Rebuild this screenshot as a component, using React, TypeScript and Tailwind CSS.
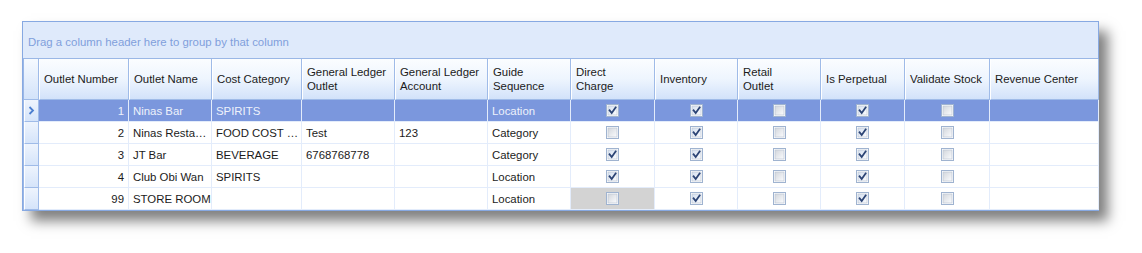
import React from 'react';

type Row = {
    num: string;
    name: string;
    cost: string;
    glOutlet: string;
    glAccount: string;
    guide: string;
    direct: boolean;
    inventory: boolean;
    retail: boolean;
    perpetual: boolean;
    validate: boolean;
    greyDirect?: boolean;
};

const rows: Row[] = [
    { num: '1', name: 'Ninas Bar', cost: 'SPIRITS', glOutlet: '', glAccount: '', guide: 'Location', direct: true, inventory: true, retail: false, perpetual: true, validate: false },
    { num: '2', name: 'Ninas Resta…', cost: 'FOOD COST …', glOutlet: 'Test', glAccount: '123', guide: 'Category', direct: false, inventory: true, retail: false, perpetual: true, validate: false },
    { num: '3', name: 'JT Bar', cost: 'BEVERAGE', glOutlet: '6768768778', glAccount: '', guide: 'Category', direct: true, inventory: true, retail: false, perpetual: true, validate: false },
    { num: '4', name: 'Club Obi Wan', cost: 'SPIRITS', glOutlet: '', glAccount: '', guide: 'Location', direct: true, inventory: true, retail: false, perpetual: true, validate: false },
    { num: '99', name: 'STORE ROOM', cost: '', glOutlet: '', glAccount: '', guide: 'Location', direct: false, inventory: true, retail: false, perpetual: true, validate: false, greyDirect: true },
];

const headers = [
    'Outlet Number',
    'Outlet Name',
    'Cost Category',
    'General Ledger Outlet',
    'General Ledger Account',
    'Guide Sequence',
    'Direct Charge',
    'Inventory',
    'Retail Outlet',
    'Is Perpetual',
    'Validate Stock',
    'Revenue Center',
];

// header labels that wrap onto two lines
const twoLine: { [key: string]: [string, string] } = {
    'General Ledger Outlet': ['General Ledger', 'Outlet'],
    'General Ledger Account': ['General Ledger', 'Account'],
    'Guide Sequence': ['Guide', 'Sequence'],
    'Direct Charge': ['Direct', 'Charge'],
    'Retail Outlet': ['Retail', 'Outlet'],
};

const cols = 'grid grid-cols-[15px_90px_83px_90px_93px_93px_83px_84px_83px_83px_84px_85px_109px]';

const Check: React.FC<{ checked: boolean }> = ({ checked }) => (
    <svg width="13" height="13" viewBox="0 0 13 13" className="block">
        <defs>
            <linearGradient id={checked ? 'cbOn' : 'cbOff'} x1="0" y1="0" x2="1" y2="1">
                <stop offset="0" stopColor={checked ? '#d5e0f0' : '#d2d6dc'} />
                <stop offset="1" stopColor="#fbfcfe" />
            </linearGradient>
        </defs>
        <rect x="0.5" y="0.5" width="12" height="12" fill="#ffffff" stroke="#9fb3d0" />
        <rect x="2" y="2" width="9" height="9" fill={`url(#${checked ? 'cbOn' : 'cbOff'})`} stroke="#bcc6d4" strokeWidth="0.7" />
        {checked && (
            <path d="M3.6 6.3 L5.7 9 L9.6 3.5" fill="none" stroke="#2c4475" strokeWidth="1.8" strokeLinecap="square" />
        )}
    </svg>
);

const Cell: React.FC<{ children?: React.ReactNode; className?: string }> = ({ children, className }) => (
    <div className={`h-[22px] border-r border-b border-[#e3ecfb] flex items-center px-1 overflow-hidden whitespace-nowrap ${className || ''}`}>
        {children}
    </div>
);

export default function App() {
    return (
        <div className="w-[1142px] h-[253px] bg-white pt-[21px] pl-[22px] font-['Liberation_Sans',Arial,sans-serif] text-[11.4px] leading-[14px] text-[#1b1b1b]">
            <div className="w-[1077px] border border-[#87a9e2] bg-[#dfeafb] shadow-[9px_10px_12px_rgba(0,0,0,0.5)]">
                <div className="h-[36px] flex items-center pl-[5px] pt-[3px] text-[#7f9fdc]">
                    Drag a column header here to group by that column
                </div>
                <div className="bg-white border-t border-l border-[#9ab7e6]">
                    {/* header */}
                    <div className={cols}>
                        <div className="h-[41px] border-r border-b border-[#9fbbe8] bg-gradient-to-b from-[#f6faff] to-[#d3e3fa]" />
                        {headers.map(h => (
                            <div
                                key={h}
                                className="h-[41px] border-r border-b border-[#9fbbe8] bg-gradient-to-b from-[#fbfdff] via-[#eef5fe] to-[#d2e2fa] flex flex-col justify-center px-[4px] border-l border-l-white whitespace-nowrap overflow-hidden"
                            >
                                {twoLine[h] ? (
                                    <>
                                        <span>{twoLine[h][0]}</span>
                                        <span>{twoLine[h][1]}</span>
                                    </>
                                ) : (
                                    <span>{h}</span>
                                )}
                            </div>
                        ))}
                    </div>
                    {/* rows */}
                    {rows.map((r, i) => {
                        const sel = i === 0;
                        const rowCls = sel ? 'bg-[#7b97dd] text-[#eef2fb] border-[#7b97dd]' : '';
                        const boxes = [r.direct, r.inventory, r.retail, r.perpetual, r.validate];
                        return (
                            <div key={r.num} className={cols}>
                                <div className="h-[22px] border-r border-b border-[#9fbbe8] bg-gradient-to-b from-[#eef4fd] to-[#d5e4fa] flex items-center justify-center border-l border-l-white">
                                    {sel && (
                                        <svg width="7" height="9" viewBox="0 0 7 9">
                                            <path d="M1.5 1 L5 4.5 L1.5 8" fill="none" stroke="#4c7fd0" strokeWidth="1.8" />
                                        </svg>
                                    )}
                                </div>
                                <Cell className={`justify-end ${rowCls}`}>{r.num}</Cell>
                                <Cell className={rowCls}>{r.name}</Cell>
                                <Cell className={rowCls}>{r.cost}</Cell>
                                <Cell className={rowCls}>{r.glOutlet}</Cell>
                                <Cell className={rowCls}>{r.glAccount}</Cell>
                                <Cell className={rowCls}>{r.guide}</Cell>
                                {boxes.map((b, j) => (
                                    <Cell
                                        key={j}
                                        className={`justify-center ${rowCls} ${j === 0 && r.greyDirect ? 'bg-[#d3d3d3]' : ''}`}
                                    >
                                        <Check checked={b} />
                                    </Cell>
                                ))}
                                <Cell className={rowCls} />
                            </div>
                        );
                    })}
                </div>
            </div>
        </div>
    );
}
